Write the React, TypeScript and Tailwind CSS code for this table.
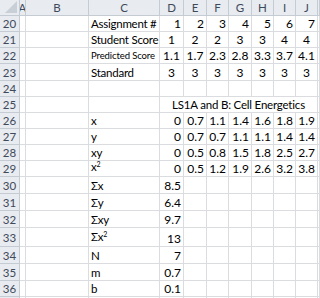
import React from "react";

type RowDef = {
  n: number;
  label?: React.ReactNode;
  vals?: string[];
  align?: "right" | "center";
  title?: string;
  hideNum?: boolean;
};

const rows: RowDef[] = [
  { n: 20, label: "Assignment #", vals: ["1", "2", "3", "4", "5", "6", "7"], align: "right" },
  { n: 21, label: "Student Score", vals: ["1", "2", "2", "3", "3", "4", "4"], align: "center" },
  {
    n: 22,
    label: <span className="text-[9.5px] tracking-[-0.1px]">Predicted Score</span>,
    vals: ["1.1", "1.7", "2.3", "2.8", "3.3", "3.7", "4.1"],
    align: "center",
  },
  { n: 23, label: "Standard", vals: ["3", "3", "3", "3", "3", "3", "3"], align: "center" },
  { n: 24 },
  { n: 25, title: "LS1A and B: Cell Energetics" },
  { n: 26, label: "x", vals: ["0", "0.7", "1.1", "1.4", "1.6", "1.8", "1.9"], align: "right" },
  { n: 27, label: "y", vals: ["0", "0.7", "0.7", "1.1", "1.1", "1.4", "1.4"], align: "right" },
  { n: 28, label: "xy", vals: ["0", "0.5", "0.8", "1.5", "1.8", "2.5", "2.7"], align: "right" },
  {
    n: 29,
    label: (
      <span>
        x<span className="relative top-[-4px] text-[7px]">2</span>
      </span>
    ),
    vals: ["0", "0.5", "1.2", "1.9", "2.6", "3.2", "3.8"],
    align: "right",
  },
  { n: 30, label: "Σx", vals: ["8.5"], align: "right" },
  { n: 31, label: "Σy", vals: ["6.4"], align: "right" },
  { n: 32, label: "Σxy", vals: ["9.7"], align: "right" },
  {
    n: 33,
    label: (
      <span>
        Σx<span className="relative top-[-4px] text-[7px]">2</span>
      </span>
    ),
    vals: ["13"],
    align: "right",
  },
  { n: 34, label: "N", vals: ["7"], align: "right" },
  { n: 35, label: "m", vals: ["0.7"], align: "right" },
  { n: 36, label: "b", vals: ["0.1"], align: "right" },
  { n: 37, hideNum: true },
];

const cellBase =
  "border-r border-b border-[#dadcdf] flex items-end whitespace-nowrap pb-[1px] leading-[13px]";
const headBase =
  "bg-[#e8ebef] border-r border-b border-[#c5cbd3] flex items-center justify-center overflow-hidden whitespace-nowrap text-[#3e4a5b] text-[11.5px] leading-none";

function Cell({ children, className = "" }: { children?: React.ReactNode; className?: string }) {
  return <div className={`${cellBase} ${className}`}>{children}</div>;
}

export default function App() {
  const letters = ["A", "B", "C", "D", "E", "F", "G", "H", "I", "J", ""];
  return (
    <div className="w-[320px] h-[298px] overflow-hidden bg-white font-['Lato',sans-serif] text-[12px] text-black">
      <div className="grid grid-cols-[20px_6px_63px_71px_24px_23px_22px_23px_22px_22px_22px_2px] grid-rows-[16px_16px_16px_16px_17px_16px_16px_16px_16px_16px_16px_17px_17px_17px_19px_17px_17px_16px_17px]">
        <div className="bg-[#e8ebef] border-r border-b border-[#c5cbd3] relative">
          <svg width="12" height="12" className="absolute right-[2px] bottom-[2px]" viewBox="0 0 12 12">
            <polygon points="12,0 12,12 0,12" fill="#c9cfd6" />
          </svg>
        </div>
        {letters.map((l, i) => (
          <div key={i} className={`${headBase} pt-[1px]`}>
            {l}
          </div>
        ))}
        {rows.map((r) => (
          <React.Fragment key={r.n}>
            <div className={`${headBase} pt-[1px]`}>{r.hideNum ? "" : r.n}</div>
            <Cell />
            <Cell />
            <Cell className="pl-[2px] text-[11.5px] tracking-[-0.25px] overflow-visible">{r.label}</Cell>
            {r.title ? (
              <Cell className="col-span-7 justify-center text-[11.5px] tracking-[-0.2px] overflow-hidden">
                {r.title}
              </Cell>
            ) : (
              Array.from({ length: 7 }).map((_, i) => (
                <Cell
                  key={i}
                  className={
                    r.align === "center"
                      ? "justify-center overflow-hidden"
                      : "justify-end pr-[2px] overflow-hidden"
                  }
                >
                  {r.vals?.[i] ?? ""}
                </Cell>
              ))
            )}
            <Cell />
          </React.Fragment>
        ))}
      </div>
    </div>
  );
}
